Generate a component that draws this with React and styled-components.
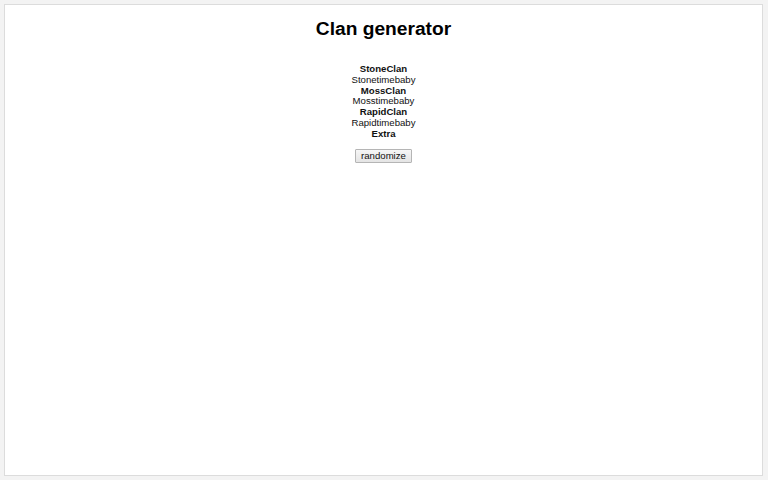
import styled, { createGlobalStyle } from 'styled-components';

const GlobalStyle = createGlobalStyle`
  html, body {
    margin: 0;
    padding: 0;
    background: #f3f3f3;
    font-family: "Liberation Sans", Arial, sans-serif;
  }
`;

const Page = styled.div`
  box-sizing: border-box;
  height: 480px;
  padding: 4px 5px 4px 4px;
`;

const Panel = styled.main`
  box-sizing: border-box;
  height: 472px;
  background: #fff;
  border: 1px solid #dcdcdc;
  display: flex;
  flex-direction: column;
  align-items: center;
  padding-top: 13px;
`;

const Title = styled.h1`
  margin: 0;
  font-size: 19.2px;
  line-height: 22px;
  font-weight: 700;
  color: #000;
`;

const ClanList = styled.div`
  margin-top: 24px;
  text-align: center;
  font-size: 9.6px;
  line-height: 10.8px;
  color: #111;
`;

const Line = styled.div`
  font-weight: ${({ $bold }) => ($bold ? 700 : 400)};
`;

const Button = styled.button`
  margin-top: 9px;
  height: 14px;
  padding: 0 5px;
  font-family: "Liberation Sans", Arial, sans-serif;
  font-size: 9.6px;
  line-height: 12px;
  color: #111;
  background: linear-gradient(#f6f6f6, #e4e4e4);
  border: 1px solid #b5b5b5;
  border-radius: 1px;
`;

const clans = [
  { name: 'StoneClan', baby: 'Stonetimebaby' },
  { name: 'MossClan', baby: 'Mosstimebaby' },
  { name: 'RapidClan', baby: 'Rapidtimebaby' },
];

const App = () => {
  return (
    <>
      <GlobalStyle />
      <Page>
        <Panel>
          <Title>Clan generator</Title>
          <ClanList>
            {clans.map((c) => (
              <div key={c.name}>
                <Line $bold>{c.name}</Line>
                <Line>{c.baby}</Line>
              </div>
            ))}
            <Line $bold>Extra</Line>
          </ClanList>
          <Button>randomize</Button>
        </Panel>
      </Page>
    </>
  );
};

export default App;
